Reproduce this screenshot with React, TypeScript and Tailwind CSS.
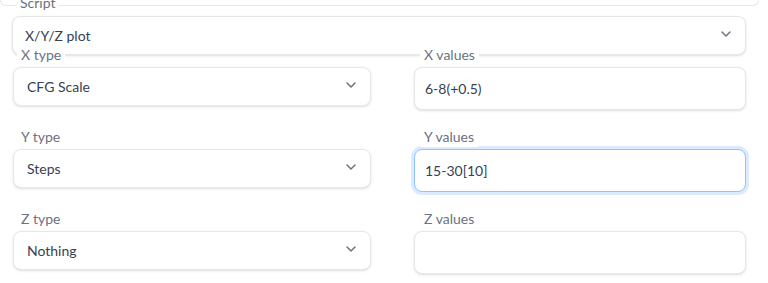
import { ChevronDown } from "lucide-react";

const font = { fontFamily: "Lato, 'Noto Sans', sans-serif" };

function Label({ text }: { text: string }) {
  return (
    <div className="relative z-10 ml-1 w-fit bg-white px-1 text-sm leading-5 text-gray-500">
      {text}
    </div>
  );
}

function Dropdown({ value }: { value: string }) {
  return (
    <div className="mt-[2px] flex h-[39px] items-center justify-between rounded-lg border border-gray-200 bg-white pl-[13px] pr-[11px] shadow-sm">
      <span className="text-sm text-gray-700">{value}</span>
      <ChevronDown className="-mt-[3px] h-4 w-4 text-gray-500" strokeWidth={2.25} />
    </div>
  );
}

function TextInput({ value, focused }: { value: string; focused?: boolean }) {
  return (
    <div
      className={
        focused
          ? "mt-[2px] flex h-[43px] items-center rounded-lg border border-blue-300 bg-white pl-[10px] ring-[3px] ring-blue-100"
          : "mt-[2px] flex h-[43px] items-center rounded-lg border border-gray-200 bg-white pl-[10px] shadow-sm"
      }
    >
      <span className="text-sm text-gray-700">{value}</span>
    </div>
  );
}

const rows = [
  { axis: "X", type: "CFG Scale", values: "6-8(+0.5)" },
  { axis: "Y", type: "Steps", values: "15-30[10]", focused: true },
  { axis: "Z", type: "Nothing", values: "" },
];

export default function App() {
  return (
    <div className="h-[283px] w-[768px] overflow-hidden bg-white" style={font}>
      {/* bottom of the block above */}
      <div className="h-[6px] w-[759px] rounded-b-lg border border-t-0 border-gray-200" />

      {/* Script */}
      <div className="-mt-[13px] ml-3">
        <Label text="Script" />
      </div>
      <div className="ml-3 mt-[3px] flex h-[39px] w-[734px] items-center justify-between rounded-lg border border-gray-200 bg-white pl-[12px] pr-[11px] shadow-sm">
        <span className="text-sm text-gray-700">X/Y/Z plot</span>
        <ChevronDown className="-mt-[3px] h-4 w-4 text-gray-500" strokeWidth={2.25} />
      </div>

      {/* Axis rows */}
      <div className="-mt-[10px] flex flex-col gap-[17px]">
        {rows.map((row) => (
          <div key={row.axis} className="flex items-start">
            <div className="ml-[13px] w-[358px]">
              <Label text={`${row.axis} type`} />
              <Dropdown value={row.type} />
            </div>
            <div className="ml-[43px] w-[332px]">
              <div className="ml-[2px]">
                <Label text={`${row.axis} values`} />
              </div>
              <TextInput value={row.values} focused={row.focused} />
            </div>
          </div>
        ))}
      </div>
    </div>
  );
}
